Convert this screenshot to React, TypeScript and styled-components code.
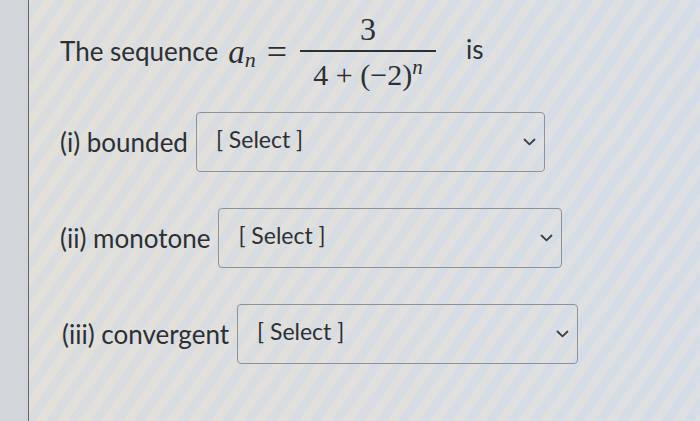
import React from "react";
import styled, { createGlobalStyle } from "styled-components";

const GlobalStyle = createGlobalStyle`
  html, body {
    margin: 0;
    padding: 0;
  }
  body {
    font-family: Lato, "Open Sans", sans-serif;
    color: #2b3035;
    background: #dcdedf;
  }
`;

const Page = styled.div`
  display: flex;
  width: 700px;
  height: 421px;
  overflow: hidden;
  background-color: #dfe0e0;
  background-image:
    repeating-linear-gradient(
      125deg,
      rgba(240, 226, 205, 0.22) 0 9px,
      rgba(196, 212, 228, 0.22) 9px 18px
    ),
    linear-gradient(90deg, #e0dfdd 0%, #dcdfe3 60%, #d8dfe8 100%);
`;

const Gutter = styled.div`
  width: 28px;
  flex-shrink: 0;
  background: #d3d6d9;
  border-right: 1.5px solid #63676b;
`;

const Content = styled.div`
  flex: 1;
  padding: 12px 0 0 31px;
  display: flex;
  flex-direction: column;
`;

const Prompt = styled.div`
  display: flex;
  align-items: center;
  height: 78px;
  font-size: 26px;
  white-space: nowrap;
`;

const MathVar = styled.span`
  font-family: "Liberation Serif", "DejaVu Serif", serif;
  font-style: italic;
  font-size: 33px;
  margin-left: 10px;
  position: relative;
  top: 2px;
`;

const Sub = styled.sub`
  font-size: 22px;
  vertical-align: -4px;
`;

const Equals = styled.span`
  font-family: "Liberation Serif", serif;
  font-size: 36px;
  margin: 0 13px 0 11px;
  position: relative;
  top: 1px;
`;

const Fraction = styled.span`
  display: inline-flex;
  flex-direction: column;
  align-items: center;
  font-family: "Liberation Serif", "DejaVu Serif", serif;
  font-size: 30px;
  line-height: 1;
`;

const Numerator = styled.span`
  padding: 0 4px 5px;
  font-size: 32px;
`;

const Denominator = styled.span`
  border-top: 2px solid #2b3035;
  padding: 5px 2px 0;
  width: 132px;
  text-align: center;
`;

const Sup = styled.sup`
  font-style: italic;
  font-size: 21px;
  vertical-align: 11px;
`;

const Trailing = styled.span`
  margin-left: 30px;
  position: relative;
  top: -2px;
`;

const Rows = styled.div`
  display: flex;
  flex-direction: column;
  gap: 36px;
  margin-top: 22px;
`;

const Row = styled.div<{ $indent: number }>`
  display: flex;
  align-items: center;
  gap: 8px;
  padding-left: ${(p) => p.$indent}px;
`;

const Label = styled.span`
  font-size: 26px;
  white-space: nowrap;
`;

const SelectBox = styled.div<{ $width: number }>`
  width: ${(p) => p.$width}px;
  height: 60px;
  box-sizing: border-box;
  border: 1.5px solid #8f9397;
  border-radius: 4px;
  display: flex;
  align-items: center;
  justify-content: space-between;
  padding: 0 8px 0 19px;
  font-size: 23px;
`;

const SelectText = styled.span`
  position: relative;
  top: -3px;
`;

const Chevron = () => (
  <svg width="13" height="8" viewBox="0 0 13 8" fill="none">
    <polyline
      points="1.5,1.5 6.5,6.3 11.5,1.5"
      stroke="#3a3f44"
      strokeWidth="1.8"
      strokeLinecap="round"
      strokeLinejoin="round"
    />
  </svg>
);

const parts = [
  { label: "(i) bounded", indent: 0, width: 349 },
  { label: "(ii) monotone", indent: 0, width: 344 },
  { label: "(iii) convergent", indent: 2, width: 341 },
];

export default function App() {
  return (
    <>
      <GlobalStyle />
      <Page>
        <Gutter />
        <Content>
          <Prompt>
            The sequence
            <MathVar>
              a<Sub>n</Sub>
            </MathVar>
            <Equals>=</Equals>
            <Fraction>
              <Numerator>3</Numerator>
              <Denominator>
                4 + (−2)<Sup>n</Sup>
              </Denominator>
            </Fraction>
            <Trailing>is</Trailing>
          </Prompt>
          <Rows>
            {parts.map((p) => (
              <Row key={p.label} $indent={p.indent}>
                <Label>{p.label}</Label>
                <SelectBox $width={p.width}>
                  <SelectText>[ Select ]</SelectText>
                  <Chevron />
                </SelectBox>
              </Row>
            ))}
          </Rows>
        </Content>
      </Page>
    </>
  );
}
